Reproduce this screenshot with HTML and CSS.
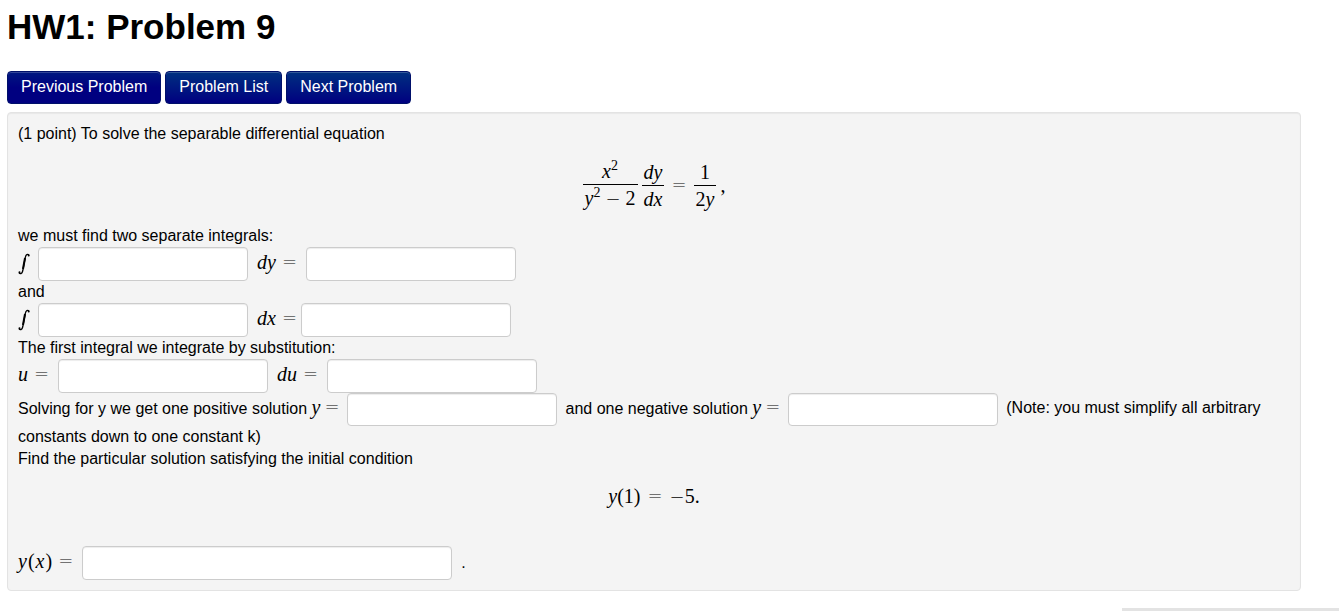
FILE: index.html
```
<!DOCTYPE html>
<html lang="en">
<head>
  <meta charset="UTF-8" />
  <meta name="viewport" content="width=device-width, initial-scale=1.0" />
  <title>HW1: Problem 9</title>
  <link rel="stylesheet" href="styles.css">
</head>
<body>
  <h1>HW1: Problem 9</h1>

  <nav class="problem-nav">
    <button type="button" class="btn active">Previous Problem</button>
    <button type="button" class="btn">Problem List</button>
    <button type="button" class="btn">Next Problem</button>
  </nav>

  <form class="problem">
    <p>(1 point) To solve the separable differential equation</p>

    <div class="equation">
      <span class="frac"><span><i>x</i><sup>2</sup></span><span class="den"><i>y</i><sup>2</sup> <b class="op">−</b> 2</span></span>
      <span class="frac"><span><i>dy</i></span><span class="den"><i>dx</i></span></span>
      <b class="op rel">=</b>
      <span class="frac"><span>1</span><span class="den">2<i>y</i></span></span>
      <span>,</span>
    </div>

    <p>we must find two separate integrals:</p>
    <div class="row">
      <label class="math int" for="int-dy">
        <svg width="12" height="22" viewBox="0 0 12 22"><path d="M1 19.6C2 21.3 4 20.9 4.700 18L7.300 4.500C7.900 1.300 9.700 .5 11 2.200" fill="none" stroke="#000" stroke-width="1.300"/><path d="M5 16L7 5" stroke="#000" stroke-width="2"/><circle cx="1.500" cy="19.300" r="1"/><circle cx="10.700" cy="2.500" r="1"/></svg>
      </label>
      <input type="text" id="int-dy">
      <label class="math" for="rhs-dy"><i>dy</i><b class="op">=</b></label>
      <input type="text" id="rhs-dy">
    </div>
    <p>and</p>
    <div class="row">
      <label class="math int" for="int-dx">
        <svg width="12" height="22" viewBox="0 0 12 22"><path d="M1 19.6C2 21.3 4 20.9 4.700 18L7.300 4.500C7.900 1.300 9.700 .5 11 2.200" fill="none" stroke="#000" stroke-width="1.300"/><path d="M5 16L7 5" stroke="#000" stroke-width="2"/><circle cx="1.500" cy="19.300" r="1"/><circle cx="10.700" cy="2.500" r="1"/></svg>
      </label>
      <input type="text" id="int-dx">
      <label class="math tight" for="rhs-dx"><i>dx</i><b class="op">=</b></label>
      <input type="text" id="rhs-dx">
    </div>
    <p>The first integral we integrate by substitution:</p>
    <div class="row">
      <label class="math" for="u"><i>u</i><b class="op">=</b></label>
      <input type="text" id="u">
      <label class="math" for="du"><i>du</i><b class="op">=</b></label>
      <input type="text" id="du">
    </div>
    <div class="row sentence">
      <label for="y-pos">Solving for y we get one positive solution <span class="math"><i>y</i><b class="op">=</b></span></label>
      <input type="text" id="y-pos">
      <label for="y-neg">and one negative solution <span class="math"><i>y</i><b class="op">=</b></span></label>
      <input type="text" id="y-neg">
      <span>(Note: you must simplify all arbitrary</span>
    </div>
    <p>constants down to one constant k)</p>
    <p>Find the particular solution satisfying the initial condition</p>

    <div class="equation condition">
      <span><i>y</i>(1)</span><b class="op rel">=</b><span><b class="op">−</b>5.</span>
    </div>

    <div class="row">
      <label class="math" for="yx"><span class="call"><i>y</i><span>(</span><i>x</i><span>)</span></span><b class="op">=</b></label>
      <input type="text" id="yx" class="wide">
      <span>.</span>
    </div>
  </form>

  <div class="footer-bar"></div>
</body>
</html>
```

FILE: styles.css
```
* {
  box-sizing: border-box;
}

body {
  margin: 0;
  padding: 7px 38px 0 7px;
  font-family: Arial, "Liberation Sans", sans-serif;
  font-size: 16px;
  line-height: 22px;
  color: #000;
  background: #fff;
}

h1 {
  margin: 0 0 24px;
  font-size: 35px;
  line-height: 40px;
}

.problem-nav {
  display: flex;
  gap: 4px;
  margin-bottom: 8px;
}

.btn {
  height: 33px;
  padding: 0 13px 2px;
  font: inherit;
  color: #fff;
  background: linear-gradient(#003080, #000080);
  border: 1px solid #00106a;
  border-radius: 4px;
  box-shadow: inset 0 1px 0 rgba(255,255,255,0.2);
  cursor: pointer;
}

.btn.active {
  background: linear-gradient(#001880, #000080 50%);
}

.problem {
  padding: 10px;
  background: #f4f4f4;
  border: 1px solid #e3e3e3;
  border-radius: 4px;
  box-shadow: inset 0 1px 1px rgba(0,0,0,0.05);
}

p {
  margin: 0;
}

.row {
  display: flex;
  align-items: center;
  gap: 9px;
  min-height: 34px;
}

input {
  width: 210px;
  height: 34px;
  padding: 4px 6px;
  font: inherit;
  background: #fff;
  border: 1px solid #ccc;
  border-radius: 4px;
  box-shadow: inset 0 1px 1px rgba(0,0,0,0.075);
}

.wide {
  width: 370px;
}

.math,
.equation {
  font-family: "Liberation Serif", "Times New Roman", serif;
  font-size: 20px;
}

.math {
  display: inline-flex;
  align-items: center;
  gap: 6px;
}

.row > .math {
  padding-bottom: 4px;
}

.row > .int {
  margin-right: -1px;
  padding-bottom: 0;
}

.tight {
  margin-right: -5px;
}

.call {
  display: flex;
  gap: 1px;
}

.sentence {
  gap: 8px;
  min-height: 33px;
}

.sentence input {
  height: 33px;
}

.sentence > label,
.sentence > span {
  padding-bottom: 3px;
}

.sentence .math {
  gap: 4px;
  line-height: 20px;
}

.op {
  font-family: "DejaVu Sans Light", "DejaVu Sans", sans-serif;
  font-size: 18px;
  font-weight: 200;
}

.equation {
  display: flex;
  justify-content: center;
  align-items: center;
  gap: 4px;
  height: 80px;
}

.frac {
  display: flex;
  flex-direction: column;
  text-align: center;
  line-height: 26px;
}

.den {
  padding: 0 2px;
  border-top: 1px solid #000;
}

sup {
  font-size: 14px;
  line-height: 0;
}

.rel {
  margin: 0 3px;
}

.condition {
  height: 76px;
  padding-bottom: 24px;
}

.footer-bar {
  width: 217px;
  height: 3px;
  margin: 17px -38px 0 auto;
  background: #e3e3e3;
}
```
